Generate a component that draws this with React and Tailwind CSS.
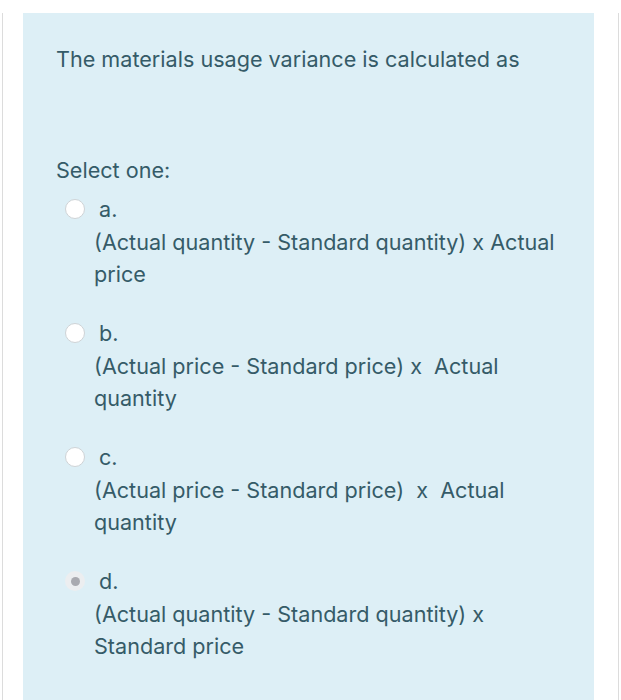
export default function App() {
  const options = [
    { l: "a.", t: ["(Actual quantity - Standard quantity) x Actual", "price"], sel: false },
    { l: "b.", t: ["(Actual price - Standard price) x  Actual", "quantity"], sel: false },
    { l: "c.", t: ["(Actual price - Standard price)  x  Actual", "quantity"], sel: false },
    { l: "d.", t: ["(Actual quantity - Standard quantity) x", "Standard price"], sel: true },
  ];
  return (
    <div className="w-[621px] h-[700px] bg-white overflow-hidden" style={{ fontFamily: "Inter, 'Noto Sans', sans-serif" }}>
      <div className="ml-[2px] w-[617px] h-[700px] border-l border-r border-[#dcdcdc] bg-white">
        <div className="ml-[20px] mt-[13px] w-[571px] h-[687px] bg-[#ddeff6] pl-[33px] pt-[30px] text-[#355b68] text-[21.6px] leading-[32px]">
          <div className="whitespace-pre">The materials usage variance is calculated as</div>
          <div className="mt-[79px]">Select one:</div>
          <div className="mt-[7px] flex flex-col gap-[27px]">
            {options.map((o) => (
              <div key={o.l}>
                <div className="flex items-center h-[32px]">
                  <div className="ml-[9px] w-[20px] h-[20px] flex items-center justify-center">
                    {o.sel ? (
                      <div className="w-[20px] h-[20px] rounded-full bg-[#eceef0] flex items-center justify-center">
                        <div className="w-[9px] h-[9px] rounded-full bg-[#a9aab0]" />
                      </div>
                    ) : (
                      <div className="w-[20px] h-[20px] rounded-full bg-white border border-[#cfd3d6]" />
                    )}
                  </div>
                  <span className="ml-[14px]">{o.l}</span>
                </div>
                <div className="pl-[38px] mt-[1px] whitespace-pre">
                  {o.t.map((x, i) => (
                    <div key={i}>{x}</div>
                  ))}
                </div>
              </div>
            ))}
          </div>
        </div>
      </div>
    </div>
  );
}
